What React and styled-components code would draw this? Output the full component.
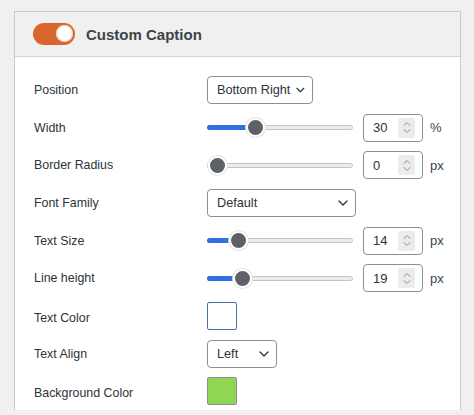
import React from "react";
import styled, { createGlobalStyle } from "styled-components";

const GlobalStyle = createGlobalStyle`
  html, body {
    margin: 0;
    padding: 0;
    background: #f0f0f1;
  }
  body {
    font-family: "Liberation Sans", Arial, sans-serif;
    color: #1d2327;
  }
`;

const fields = [
  { label: "Position", type: "select", value: "Bottom Right", width: 106 },
  { label: "Width", type: "range", value: 30, min: 0, max: 100, unit: "%" },
  { label: "Border Radius", type: "range", value: 0, min: 0, max: 50, unit: "px" },
  { label: "Font Family", type: "select", value: "Default", width: 149 },
  { label: "Text Size", type: "range", value: 14, min: 8, max: 44, unit: "px" },
  { label: "Line height", type: "range", value: 19, min: 10, max: 55, unit: "px" },
  { label: "Text Color", type: "color", value: "#ffffff", border: "#4f6fa8" },
  { label: "Text Align", type: "select", value: "Left", width: 70 },
  { label: "Background Color", type: "color", value: "#8fd655", border: "#8c8f94" },
];

const Page = styled.div`
  padding: 11px 13px 0 14px;
`;

const Panel = styled.section`
  background: #fff;
  border: 1px solid #c9cacc;
  border-bottom: none;
`;

const Header = styled.div`
  display: flex;
  align-items: center;
  gap: 11px;
  height: 44px;
  padding: 0 18px;
  background: #f0f0f0;
  border-bottom: 1px solid #d2d3d5;
`;

const Toggle = styled.span`
  position: relative;
  width: 42px;
  height: 22px;
  border-radius: 11px;
  background: #d8672e;
  flex-shrink: 0;

  &::after {
    content: "";
    position: absolute;
    top: 2px;
    right: 2px;
    width: 17px;
    height: 17px;
    border-radius: 50%;
    background: #fff;
    box-shadow: inset 0 0 0 1px #f3c9a8;
  }
`;

const Title = styled.h2`
  margin: 0;
  font-size: 15px;
  font-weight: 700;
  color: #3c434a;
`;

const Body = styled.div`
  padding: 14px 19px 0;
`;

const Row = styled.div`
  display: grid;
  grid-template-columns: 173px 1fr;
  align-items: center;
  height: 37.7px;
`;

const Label = styled.label`
  font-size: 12.4px;
  color: #2c3338;
  padding-top: ${(p) => (p.$low ? "4px" : "0")};
`;

const Controls = styled.div`
  display: flex;
  align-items: center;
`;

const Select = styled.div`
  display: flex;
  align-items: center;
  justify-content: space-between;
  gap: 6px;
  box-sizing: border-box;
  width: ${(p) => p.$width}px;
  height: 28px;
  padding: 0 7px 0 9px;
  border: 1px solid #8c8f94;
  border-radius: 4px;
  background: #fff;
  font-size: 12.7px;
  color: #2c3338;
  white-space: nowrap;
`;

const SliderTrack = styled.div`
  position: relative;
  width: 146px;
  height: 5px;
  box-sizing: border-box;
  border: 1px solid #c3c4c7;
  border-radius: 3px;
  background: #ececec;
`;

const SliderFill = styled.div`
  position: absolute;
  left: -1px;
  top: -1px;
  height: 5px;
  border-radius: 3px;
  background: #2f6fe0;
`;

const SliderThumb = styled.div`
  position: absolute;
  top: 50%;
  width: 15px;
  height: 15px;
  margin-top: -9.5px;
  margin-left: -9.5px;
  border: 2px solid #fff;
  border-radius: 50%;
  background: #5d6067;
  box-shadow: 0 0 0 1px #e4e4e6;
`;

const NumberBox = styled.div`
  display: flex;
  align-items: center;
  justify-content: space-between;
  box-sizing: border-box;
  width: 60px;
  height: 28px;
  margin-left: 10px;
  padding: 0 7px 0 9px;
  border: 1px solid #8c8f94;
  border-radius: 4px;
  background: #fff;
  font-size: 13px;
  color: #2c3338;
`;

const Spinner = styled.span`
  display: flex;
  align-items: center;
  justify-content: center;
  width: 17px;
  height: 20px;
  background: #ececec;
  border-radius: 2px;
`;

const Unit = styled.span`
  margin-left: 7px;
  font-size: 13px;
  color: #3c434a;
`;

const Swatch = styled.div`
  box-sizing: border-box;
  width: 30px;
  height: 28px;
  border: 1px solid ${(p) => p.$border};
  border-radius: 2px;
  background: ${(p) => p.$color};
`;

const Chevron = () => (
  <svg width="10" height="6" viewBox="0 0 10 6" fill="none">
    <path d="M1 1l4 4 4-4" stroke="#2c3338" strokeWidth="1.3" strokeLinecap="round" strokeLinejoin="round" />
  </svg>
);

const SpinIcon = () => (
  <svg width="8" height="13" viewBox="0 0 8 13" fill="none">
    <path d="M1 4.5l3-3 3 3M1 8.5l3 3 3-3" stroke="#8c8f94" strokeWidth="1" strokeLinecap="round" strokeLinejoin="round" />
  </svg>
);

const Range = ({ value, min, max, unit }) => {
  const frac = (value - min) / (max - min);
  const center = 9.5 + frac * (146 - 19);
  return (
    <Controls>
      <SliderTrack>
        <SliderFill style={{ width: `${center}px` }} />
        <SliderThumb style={{ left: `${center}px` }} />
      </SliderTrack>
      <NumberBox>
        <span>{value}</span>
        <Spinner>
          <SpinIcon />
        </Spinner>
      </NumberBox>
      <Unit>{unit}</Unit>
    </Controls>
  );
};

const Field = ({ field }) => {
  if (field.type === "select") {
    return (
      <Select $width={field.width}>
        <span>{field.value}</span>
        <Chevron />
      </Select>
    );
  }
  if (field.type === "range") return <Range {...field} />;
  return <Swatch $color={field.value} $border={field.border} />;
};

export default function App() {
  return (
    <Page>
      <GlobalStyle />
      <Panel>
        <Header>
          <Toggle />
          <Title>Custom Caption</Title>
        </Header>
        <Body>
          {fields.map((f) => (
            <Row key={f.label}>
              <Label $low={f.type === "color"}>{f.label}</Label>
              <Field field={f} />
            </Row>
          ))}
        </Body>
      </Panel>
    </Page>
  );
}
